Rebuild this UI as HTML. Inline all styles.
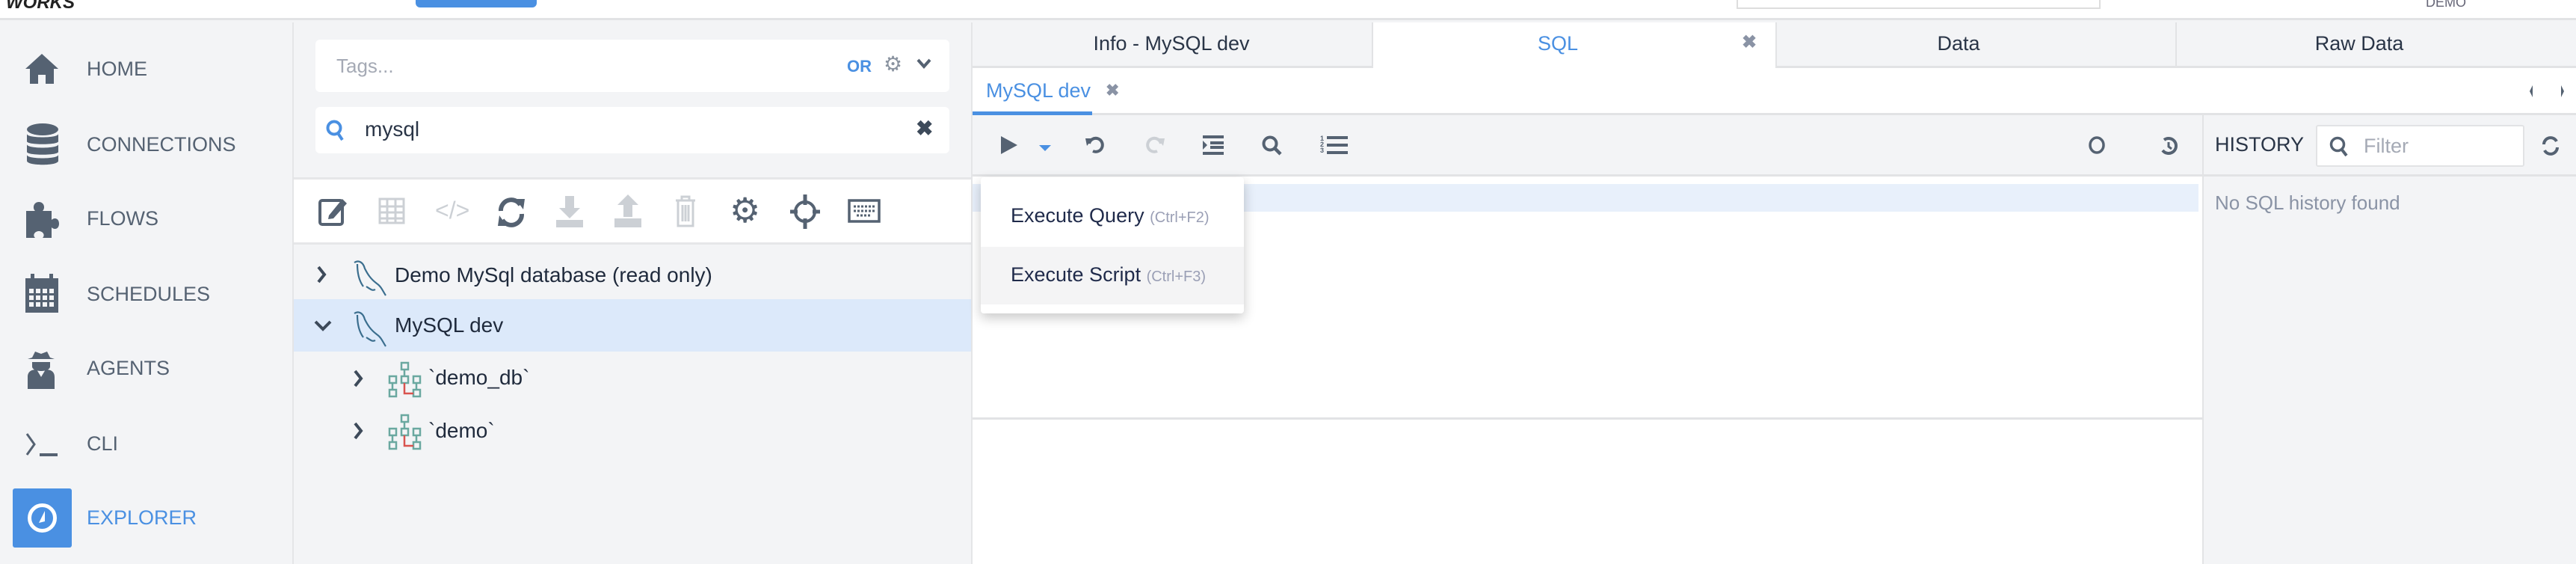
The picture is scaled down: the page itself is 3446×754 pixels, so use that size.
<!DOCTYPE html>
<html><head><meta charset="utf-8"><style>
*{box-sizing:border-box;margin:0;padding:0}
body{width:3446px;height:754px;overflow:hidden;background:#f3f4f6;font-family:"Liberation Sans",sans-serif;position:relative;color:#2a3547}
.a{position:absolute}
.t{position:absolute;white-space:nowrap;line-height:1}
.side{font-size:27px;color:#556272}
svg{position:absolute;overflow:visible}
</style></head><body>
<!-- top bar -->
<div class="a" style="left:0;top:0;width:3446px;height:27px;background:#fff;border-bottom:3px solid #e2e3e5"></div>
<div class="t" style="left:8px;top:-8px;font-size:24px;font-weight:bold;font-style:italic;color:#222">WORKS</div>
<div class="a" style="left:556px;top:0;width:162px;height:10px;background:#4a90e2;border-radius:0 0 6px 6px"></div>
<div class="a" style="left:2323px;top:0;width:487px;height:12px;background:#fff;border:2px solid #ddd;border-top:none"></div>
<div class="t" style="left:3245px;top:-6px;font-size:18px;color:#667">DEMO</div>

<!-- sidebar -->
<div class="a" style="left:0;top:30px;width:393px;height:724px;background:#f3f4f6;border-right:2px solid #e4e5e7"></div>
<svg style="left:33px;top:70px" width="46" height="44" viewBox="0 0 46 44"><path d="M23 2 L45 22 L39 22 L39 42 L28 42 L28 30 L18 30 L18 42 L7 42 L7 22 L1 22Z" fill="#556272"/></svg>
<div class="t side" style="left:116px;top:79px">HOME</div>
<svg style="left:35px;top:165px" width="44" height="56" viewBox="0 0 44 56"><ellipse cx="22" cy="8" rx="21" ry="8" fill="#556272"/><path d="M1 14 v10 c0 5 42 5 42 0 v-10 c0 6-42 6-42 0z M1 28 v10 c0 5 42 5 42 0 v-10 c0 6-42 6-42 0z M1 42 v8 c0 7 42 7 42 0 v-8 c0 6-42 6-42 0z" fill="#556272"/></svg>
<div class="t side" style="left:116px;top:180px">CONNECTIONS</div>
<svg style="left:33px;top:268px" width="46" height="50" viewBox="0 0 46 50"><path d="M2 14 h12 c-4-4-2-12 5-12 s9 8 5 12 h12 v12 c4-4 10-2 10 5 s-6 9-10 5 v14 h-12 c4-4 0-9-5-9 s-9 5-5 9 h-12z" fill="#556272"/></svg>
<div class="t side" style="left:116px;top:279px">FLOWS</div>
<svg style="left:33px;top:366px" width="46" height="54" viewBox="0 0 46 54"><rect x="1" y="6" width="44" height="46" fill="#556272"/><g fill="#f3f4f6"><rect x="6" y="20" width="6" height="6"/><rect x="15" y="20" width="6" height="6"/><rect x="24" y="20" width="6" height="6"/><rect x="33" y="20" width="6" height="6"/><rect x="6" y="29" width="6" height="6"/><rect x="15" y="29" width="6" height="6"/><rect x="24" y="29" width="6" height="6"/><rect x="33" y="29" width="6" height="6"/><rect x="6" y="38" width="6" height="6"/><rect x="15" y="38" width="6" height="6"/><rect x="24" y="38" width="6" height="6"/><rect x="33" y="38" width="6" height="6"/></g><rect x="8" y="0" width="5" height="12" fill="#556272"/><rect x="33" y="0" width="5" height="12" fill="#556272"/></svg>
<div class="t side" style="left:116px;top:380px">SCHEDULES</div>
<svg style="left:35px;top:468px" width="40" height="52" viewBox="0 0 40 52"><path d="M8 10 L12 2 L20 5 L28 2 L32 10 L38 12 L2 12Z M8 16 h24 v6 c0 8-24 8-24 0z M2 52 v-16 c0-8 6-10 12-10 l6 10 6-10 c6 0 12 2 12 10 v16z" fill="#556272"/></svg>
<div class="t side" style="left:116px;top:479px">AGENTS</div>
<svg style="left:33px;top:578px" width="46" height="34" viewBox="0 0 46 34"><path d="M3 2 L13 16 L3 30" stroke="#556272" stroke-width="3" fill="none"/><rect x="20" y="28" width="24" height="4" fill="#556272"/></svg>
<div class="t side" style="left:116px;top:580px">CLI</div>
<div class="a" style="left:17px;top:653px;width:79px;height:79px;background:#4a90e2;border-radius:3px"></div>
<svg style="left:35px;top:671px" width="43" height="43" viewBox="0 0 43 43"><circle cx="21.5" cy="21.5" r="17" stroke="#fff" stroke-width="5" fill="none"/><path d="M25 12 L17 28 L25 26Z" fill="#fff"/></svg>
<div class="t side" style="left:116px;top:679px;color:#4a90e2">EXPLORER</div>

<!-- middle panel -->
<div class="a" style="left:422px;top:53px;width:848px;height:70px;background:#fff;border-radius:6px"></div>
<div class="t" style="left:450px;top:75px;font-size:26px;color:#a5aab5">Tags...</div>
<div class="t" style="left:1133px;top:78px;font-size:22px;font-weight:bold;color:#4a90e2">OR</div>
<div class="t" style="left:1182px;top:72px;font-size:28px;color:#8a93a0">⚙</div>
<svg style="left:1226px;top:78px" width="20" height="14"><path d="M2 2 L10 11 L18 2" stroke="#556272" stroke-width="4" fill="none"/></svg>
<div class="a" style="left:422px;top:143px;width:848px;height:62px;background:#fff;border-radius:6px"></div>
<svg style="left:436px;top:160px" width="26" height="30"><circle cx="11" cy="11" r="8.5" stroke="#4a90e2" stroke-width="4" fill="none"/><path d="M16 18 L22 27" stroke="#4a90e2" stroke-width="4"/></svg>
<div class="t" style="left:488px;top:159px;font-size:28px;color:#2a3547">mysql</div>
<div class="t" style="left:1225px;top:158px;font-size:28px;font-weight:bold;color:#3d4a5a">✖</div>
<div class="a" style="left:393px;top:237px;width:906px;height:90px;background:#fff;border-top:3px solid #e6e7e9;border-bottom:3px solid #e6e7e9"></div>
<g></g>
<svg style="left:426px;top:262px" width="40" height="40" viewBox="0 0 40 40"><rect x="2" y="6" width="30" height="32" rx="3" stroke="#556272" stroke-width="4" fill="none"/><path d="M14 26 L32 4 L38 10 L20 30 L13 31Z" fill="#556272"/></svg>
<svg style="left:506px;top:262px" width="36" height="40" viewBox="0 0 36 40"><rect x="2" y="4" width="32" height="32" stroke="#ccd0d5" stroke-width="3" fill="none"/><path d="M2 14h32M2 22h32M2 30h32M12 4v32M23 4v32" stroke="#ccd0d5" stroke-width="3"/></svg>
<div class="t" style="left:582px;top:265px;font-size:32px;color:#ccd0d5">&lt;/&gt;</div>
<svg style="left:664px;top:262px" width="40" height="44" viewBox="0 0 40 44"><path d="M6 20 A14 14 0 0 1 32 12 M34 24 A14 14 0 0 1 8 32" stroke="#556272" stroke-width="6" fill="none"/><path d="M26 4 L38 4 L36 18Z M14 40 L2 40 L4 26Z" fill="#556272"/></svg>
<svg style="left:744px;top:262px" width="36" height="44" viewBox="0 0 36 44"><path d="M12 0h12v16h8L18 30 4 16h8z M0 32h36v10H0z" fill="#ccd0d5"/></svg>
<svg style="left:822px;top:260px" width="36" height="44" viewBox="0 0 36 44"><path d="M12 30h12V14h8L18 0 4 14h8z M0 32h36v12H0z" fill="#ccd0d5"/></svg>
<svg style="left:902px;top:260px" width="30" height="44" viewBox="0 0 30 44"><path d="M2 8h26M10 8V3h10v5M5 8v34h20V8M11 14v22M15 14v22M19 14v22" stroke="#ccd0d5" stroke-width="3" fill="none"/></svg>
<div class="t" style="left:976px;top:258px;font-size:46px;color:#556272">⚙</div>
<svg style="left:1057px;top:260px" width="40" height="46" viewBox="0 0 40 46"><circle cx="20" cy="23" r="13" stroke="#556272" stroke-width="4" fill="none"/><path d="M20 0v14M20 32v14M0 23h10M30 23h10" stroke="#556272" stroke-width="5"/></svg>
<svg style="left:1134px;top:266px" width="44" height="32" viewBox="0 0 44 32"><rect x="2" y="2" width="40" height="28" stroke="#556272" stroke-width="3.5" fill="none"/><path d="M8 10h28M8 16h28M12 22h20" stroke="#556272" stroke-width="3" stroke-dasharray="3 2"/></svg>

<!-- tree -->
<svg style="left:423px;top:355px" width="14" height="24"><path d="M3 2 L11 12 L3 22" stroke="#3d4a5a" stroke-width="4" fill="none"/></svg>
<svg style="left:470px;top:345px" width="52" height="52" viewBox="0 0 52 52"><path d="M4 6 C10 2 16 6 18 14 C22 22 26 28 34 34 C40 38 42 44 46 50 M8 8 C8 18 10 30 16 38 M20 38 C26 42 28 44 32 42" stroke="#3b6e8e" stroke-width="2.2" fill="none"/></svg>
<div class="t" style="left:528px;top:354px;font-size:28px;color:#1f2a3c">Demo MySql database (read only)</div>
<div class="a" style="left:393px;top:400px;width:906px;height:70px;background:#dce9fa"></div>
<svg style="left:420px;top:428px" width="24" height="14"><path d="M2 2 L12 12 L22 2" stroke="#3d4a5a" stroke-width="4" fill="none"/></svg>
<svg style="left:470px;top:413px" width="52" height="52" viewBox="0 0 52 52"><path d="M4 6 C10 2 16 6 18 14 C22 22 26 28 34 34 C40 38 42 44 46 50 M8 8 C8 18 10 30 16 38 M20 38 C26 42 28 44 32 42" stroke="#3b6e8e" stroke-width="2.2" fill="none"/></svg>
<div class="t" style="left:528px;top:421px;font-size:28px;color:#1f2a3c">MySQL dev</div>
<svg style="left:472px;top:494px" width="14" height="24"><path d="M3 2 L11 12 L3 22" stroke="#3d4a5a" stroke-width="4" fill="none"/></svg>
<svg style="left:519px;top:483px" width="46" height="50" viewBox="0 0 46 50"><g stroke="#6aa8a0" stroke-width="2.5" fill="none"><rect x="18" y="2" width="9" height="9"/><rect x="2" y="20" width="9" height="9"/><rect x="18" y="20" width="9" height="9"/><rect x="34" y="20" width="9" height="9"/><rect x="2" y="38" width="9" height="9"/><rect x="34" y="38" width="9" height="9"/><path d="M22 11v9M6 29v9M38 29v9"/></g><path d="M22 29v14h12" stroke="#d9534f" stroke-width="2.5" fill="none"/></svg>
<div class="t" style="left:573px;top:491px;font-size:28px;color:#1f2a3c">`demo_db`</div>
<svg style="left:472px;top:564px" width="14" height="24"><path d="M3 2 L11 12 L3 22" stroke="#3d4a5a" stroke-width="4" fill="none"/></svg>
<svg style="left:519px;top:553px" width="46" height="50" viewBox="0 0 46 50"><g stroke="#6aa8a0" stroke-width="2.5" fill="none"><rect x="18" y="2" width="9" height="9"/><rect x="2" y="20" width="9" height="9"/><rect x="18" y="20" width="9" height="9"/><rect x="34" y="20" width="9" height="9"/><rect x="2" y="38" width="9" height="9"/><rect x="34" y="38" width="9" height="9"/><path d="M22 11v9M6 29v9M38 29v9"/></g><path d="M22 29v14h12" stroke="#d9534f" stroke-width="2.5" fill="none"/></svg>
<div class="t" style="left:573px;top:562px;font-size:28px;color:#1f2a3c">`demo`</div>

<!-- right: tabs -->
<div class="a" style="left:1299px;top:30px;width:2147px;height:724px;background:#fff;border-left:2px solid #e4e5e7"></div>
<div class="a" style="left:1301px;top:30px;width:536px;height:61px;background:#f3f4f6;border-right:2px solid #e2e3e5;border-bottom:3px solid #e2e3e5"></div>
<div class="a" style="left:2375px;top:30px;width:537px;height:61px;background:#f3f4f6;border-left:2px solid #e2e3e5;border-right:2px solid #e2e3e5;border-bottom:3px solid #e2e3e5"></div>
<div class="a" style="left:2912px;top:30px;width:534px;height:61px;background:#f3f4f6;border-bottom:3px solid #e2e3e5"></div>
<div class="t" style="left:1567px;top:45px;font-size:27px;color:#2a3547;transform:translateX(-50%)">Info - MySQL dev</div>
<div class="t" style="left:2084px;top:45px;font-size:27px;color:#4a90e2;transform:translateX(-50%)">SQL</div>
<div class="t" style="left:2330px;top:45px;font-size:24px;font-weight:bold;color:#8a93a5">✖</div>
<div class="t" style="left:2620px;top:45px;font-size:27px;color:#2a3547;transform:translateX(-50%)">Data</div>
<div class="t" style="left:3156px;top:45px;font-size:27px;color:#2a3547;transform:translateX(-50%)">Raw Data</div>
<!-- subtab -->
<div class="t" style="left:1319px;top:108px;font-size:27px;color:#4a90e2">MySQL dev</div>
<div class="t" style="left:1479px;top:110px;font-size:22px;font-weight:bold;color:#8a93a5">✖</div>
<div class="a" style="left:1301px;top:151px;width:2145px;height:3px;background:#e2e3e5"></div>
<div class="a" style="left:1301px;top:149px;width:160px;height:5px;background:#4a90e2"></div>
<svg style="left:3382px;top:112px" width="50" height="20"><path d="M6 2 L2 10 L6 18Z M44 2 L48 10 L44 18Z" fill="#556272"/></svg>
<!-- toolbar -->
<div class="a" style="left:1301px;top:154px;width:2145px;height:82px;background:#f3f4f6;border-bottom:3px solid #e2e3e5"></div>
<div class="a" style="left:2946px;top:154px;width:2px;height:600px;background:#e2e3e5"></div>
<div class="a" style="left:2948px;top:236px;width:498px;height:518px;background:#f3f4f6"></div>
<svg style="left:1338px;top:181px" width="24" height="26"><path d="M1 1 L23 13 L1 25Z" fill="#556272"/></svg>
<svg style="left:1390px;top:194px" width="16" height="9"><path d="M0 0h16L8 8z" fill="#4a90e2"/></svg>
<svg style="left:1452px;top:181px" width="26" height="26" viewBox="0 0 26 26"><path d="M5 11 A9 9 0 1 1 10 21" stroke="#556272" stroke-width="4" fill="none"/><path d="M0 4 L10 4 L2 14Z" fill="#556272"/></svg>
<svg style="left:1532px;top:181px" width="26" height="26" viewBox="0 0 26 26"><path d="M21 11 A9 9 0 1 0 16 21" stroke="#ccd0d5" stroke-width="4" fill="none"/><path d="M26 4 L16 4 L24 14Z" fill="#ccd0d5"/></svg>
<svg style="left:1609px;top:182px" width="28" height="24"><path d="M0 1h28M10 9h18M10 15h18M0 23h28" stroke="#556272" stroke-width="4"/><path d="M0 6 L6 12 L0 18Z" fill="#556272"/></svg>
<svg style="left:1688px;top:181px" width="28" height="28"><circle cx="11" cy="11" r="8.5" stroke="#556272" stroke-width="4" fill="none"/><path d="M17 17 L25 25" stroke="#556272" stroke-width="4.5"/></svg>
<div class="t" style="left:1766px;top:181px;font-size:9px;line-height:8px;font-weight:bold;color:#556272">1<br>2<br>3</div>
<svg style="left:1775px;top:182px" width="28" height="24"><path d="M0 2h28M0 12h28M0 22h28" stroke="#556272" stroke-width="4"/></svg>
<svg style="left:2793px;top:181px" width="24" height="26"><ellipse cx="12" cy="13" rx="9" ry="10" stroke="#556272" stroke-width="3.5" fill="none"/></svg>
<svg style="left:2887px;top:181px" width="28" height="28" viewBox="0 0 28 28"><path d="M8 6 A10 10 0 1 1 6 20" stroke="#556272" stroke-width="4" fill="none"/><path d="M14 9v6l4 3" stroke="#556272" stroke-width="3" fill="none"/></svg>
<div class="t" style="left:2963px;top:180px;font-size:27px;color:#2a3547">HISTORY</div>
<div class="a" style="left:3098px;top:167px;width:279px;height:56px;background:#fff;border:2px solid #e2e3e5;border-radius:3px"></div>
<svg style="left:3116px;top:182px" width="26" height="28"><circle cx="11" cy="11" r="8.5" stroke="#556272" stroke-width="3.5" fill="none"/><path d="M16 17 L23 26" stroke="#556272" stroke-width="4"/></svg>
<div class="t" style="left:3162px;top:182px;font-size:27px;color:#a5aab5">Filter</div>
<svg style="left:3400px;top:181px" width="24" height="28" viewBox="0 0 24 28"><path d="M3 12 A9 9 0 0 1 20 8 M21 16 A9 9 0 0 1 4 20" stroke="#556272" stroke-width="4" fill="none"/></svg>
<div class="t" style="left:2963px;top:258px;font-size:26px;color:#8a93a5">No SQL history found</div>
<!-- editor -->
<div class="a" style="left:1301px;top:246px;width:1640px;height:37px;background:#e8f0fb"></div>
<div class="a" style="left:1301px;top:558px;width:1645px;height:3px;background:#e2e3e5"></div>
<!-- dropdown -->
<div class="a" style="left:1312px;top:237px;width:352px;height:182px;background:#fff;border-radius:4px;box-shadow:0 6px 16px rgba(0,0,0,.22)"></div>
<div class="a" style="left:1312px;top:330px;width:352px;height:77px;background:#f4f4f5"></div>
<div class="t" style="left:1352px;top:275px;font-size:27px;color:#1f2a4a">Execute Query <span style="font-size:20px;color:#9a9fb5">(Ctrl+F2)</span></div>
<div class="t" style="left:1352px;top:354px;font-size:27px;color:#1f2a4a">Execute Script <span style="font-size:20px;color:#9a9fb5">(Ctrl+F3)</span></div>
</body></html>
